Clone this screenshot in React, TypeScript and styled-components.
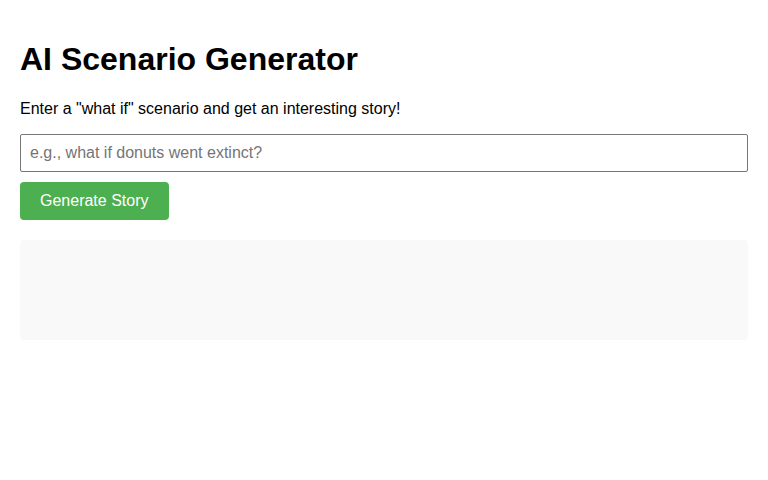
import React, { useState } from "react";
import styled, { createGlobalStyle } from "styled-components";

const Global = createGlobalStyle`
  html, body { margin: 0; padding: 0; background: #fff; }
  body { font-family: "Liberation Sans", Arial, sans-serif; color: #000; }
`;

const Page = styled.div`
  padding: 20px;
`;

const Title = styled.h1`
  font-size: 32px;
  font-weight: bold;
  margin: 21.44px 0;
`;

const Intro = styled.p`
  font-size: 16px;
  margin: 16px 0;
`;

const Input = styled.input`
  display: block;
  box-sizing: border-box;
  width: 100%;
  height: 38px;
  padding: 0 9px;
  font-family: "Liberation Sans", Arial, sans-serif;
  font-size: 16px;
  border: 1px solid #767676;
  border-radius: 2px;
  margin-bottom: 10px;
  &::placeholder { color: #757575; }
`;

const Button = styled.button`
  display: block;
  height: 38px;
  padding: 0 20px;
  font-family: "Liberation Sans", Arial, sans-serif;
  font-size: 16px;
  color: #fff;
  background: #4caf50;
  border: none;
  border-radius: 4px;
  cursor: pointer;
`;

const Story = styled.div`
  margin-top: 20px;
  height: 100px;
  background: #f9f9f9;
  border-radius: 4px;
`;

export default function App() {
  const [v, setV] = useState("");
  return (
    <>
      <Global />
      <Page>
        <Title>AI Scenario Generator</Title>
        <Intro>Enter a "what if" scenario and get an interesting story!</Intro>
        <Input
          value={v}
          onChange={(e) => setV(e.target.value)}
          placeholder="e.g., what if donuts went extinct?"
        />
        <Button>Generate Story</Button>
        <Story />
      </Page>
    </>
  );
}
